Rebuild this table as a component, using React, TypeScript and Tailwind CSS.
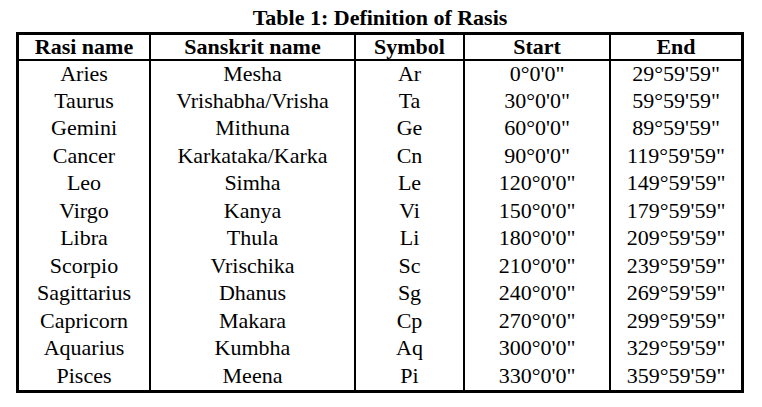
const rows: [string, string, string, string, string][] = [
  ['Aries', 'Mesha', 'Ar', `0°0'0"`, `29°59'59"`],
  ['Taurus', 'Vrishabha/Vrisha', 'Ta', `30°0'0"`, `59°59'59"`],
  ['Gemini', 'Mithuna', 'Ge', `60°0'0"`, `89°59'59"`],
  ['Cancer', 'Karkataka/Karka', 'Cn', `90°0'0"`, `119°59'59"`],
  ['Leo', 'Simha', 'Le', `120°0'0"`, `149°59'59"`],
  ['Virgo', 'Kanya', 'Vi', `150°0'0"`, `179°59'59"`],
  ['Libra', 'Thula', 'Li', `180°0'0"`, `209°59'59"`],
  ['Scorpio', 'Vrischika', 'Sc', `210°0'0"`, `239°59'59"`],
  ['Sagittarius', 'Dhanus', 'Sg', `240°0'0"`, `269°59'59"`],
  ['Capricorn', 'Makara', 'Cp', `270°0'0"`, `299°59'59"`],
  ['Aquarius', 'Kumbha', 'Aq', `300°0'0"`, `329°59'59"`],
  ['Pisces', 'Meena', 'Pi', `330°0'0"`, `359°59'59"`],
];

const headers = ['Rasi name', 'Sanskrit name', 'Symbol', 'Start', 'End'];
const widths = ['w-[131px]', 'w-[205px]', 'w-[109px]', 'w-[146px]', 'w-[131px]'];

export default function App() {
  return (
    <div className="w-[762px] h-[407px] bg-white text-black font-[Liberation_Serif,serif]">
      <h1 className="w-[728px] ml-[16px] pt-[7px] mb-[3px] text-center text-[22px] leading-[22px] font-bold">
        Table 1: Definition of Rasis
      </h1>
      <div className="w-[728px] ml-[16px] border-[3px] border-black">
        <table className="w-full border-collapse table-fixed text-[22px] leading-none">
          <thead>
            <tr className="h-[25px] border-b-2 border-black">
              {headers.map((h, i) => (
                <th
                  key={h}
                  className={`${widths[i]} p-0 font-bold text-center ${i > 0 ? 'border-l-[2.5px] border-black' : ''}`}
                >
                  {h}
                </th>
              ))}
            </tr>
          </thead>
          <tbody>
            {rows.map((r) => (
              <tr key={r[0]} className="h-[27.5px]">
                {r.map((c, i) => (
                  <td
                    key={i}
                    className={`p-0 pb-[1px] text-center ${i > 0 ? 'border-l-[2.5px] border-black' : ''}`}
                  >
                    {c}
                  </td>
                ))}
              </tr>
            ))}
          </tbody>
        </table>
      </div>
    </div>
  );
}
